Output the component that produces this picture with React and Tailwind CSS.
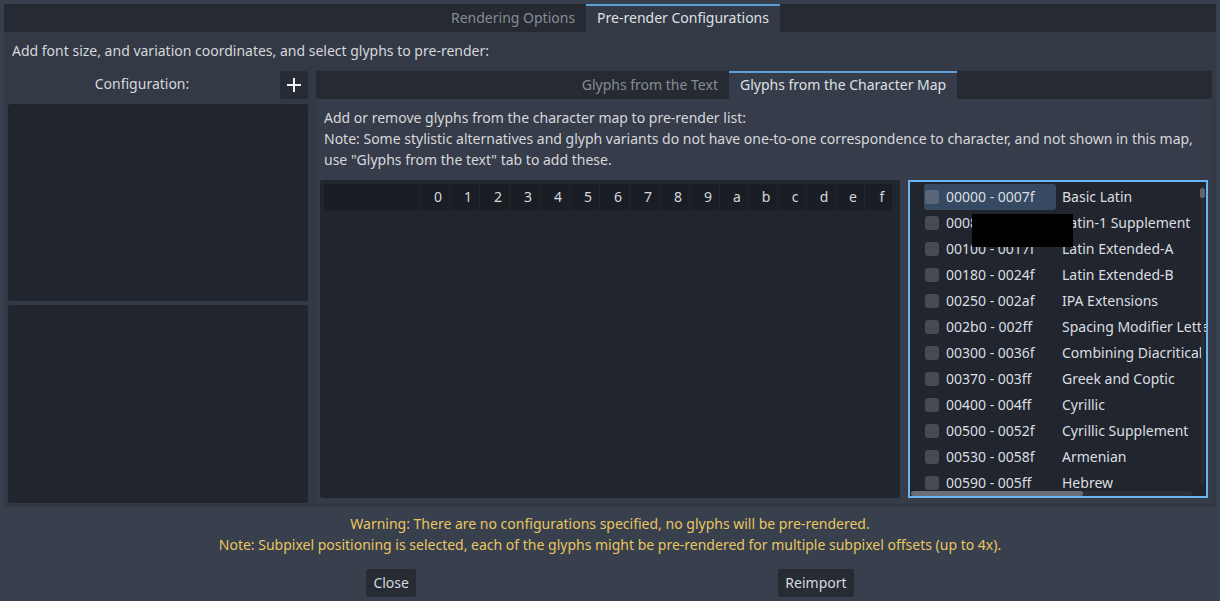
import React from "react";

const blocks = [
  ["00000 - 0007f", "Basic Latin"],
  ["00080 - 000ff", "Latin-1 Supplement"],
  ["00100 - 0017f", "Latin Extended-A"],
  ["00180 - 0024f", "Latin Extended-B"],
  ["00250 - 002af", "IPA Extensions"],
  ["002b0 - 002ff", "Spacing Modifier Letters"],
  ["00300 - 0036f", "Combining Diacritical Marks"],
  ["00370 - 003ff", "Greek and Coptic"],
  ["00400 - 004ff", "Cyrillic"],
  ["00500 - 0052f", "Cyrillic Supplement"],
  ["00530 - 0058f", "Armenian"],
  ["00590 - 005ff", "Hebrew"],
  ["00600 - 006ff", "Arabic"],
];

const digits = ["0", "1", "2", "3", "4", "5", "6", "7", "8", "9"];
const letters = ["a", "b", "c", "d", "e", "f"];

function Tab({ label, active, activeBg }) {
  return (
    <div
      className={
        active
          ? `h-[28px] px-[11px] pb-[4px] flex items-center border-t-2 border-[#5d9fd8] text-[#dfe1e4] ${activeBg}`
          : "h-[28px] px-[11px] pb-[2px] flex items-center text-[#878c94]"
      }
    >
      {label}
    </div>
  );
}

function PlusIcon() {
  return (
    <svg width="14" height="14" viewBox="0 0 14 14">
      <rect x="6" y="0" width="2" height="14" fill="#f2f3f5" />
      <rect x="0" y="6" width="14" height="2" fill="#f2f3f5" />
    </svg>
  );
}

function CharMapHeader() {
  return (
    <div className="flex h-[26px] w-[568px] bg-[#1a1d23] rounded-[3px] text-[#d6d8dc] overflow-hidden">
      <div className="w-[95px] shrink-0" />
      {digits.map((d) => (
        <div key={d} className="w-[30px] shrink-0 flex items-center justify-center pl-[7px] pb-[1px] border-l border-[#22262d]">
          {d}
        </div>
      ))}
      {letters.map((d) => (
        <div key={d} className="w-[29px] shrink-0 flex items-center justify-center pl-[6px] pb-[1px] border-l border-[#22262d]">
          {d}
        </div>
      ))}
    </div>
  );
}

function BlockRow({ range, name, selected }) {
  return (
    <div className="flex h-[26px] items-center whitespace-nowrap">
      <div
        className={
          selected
            ? "w-[132px] h-[26px] shrink-0 flex items-center rounded-[3px] bg-[#364b63] pl-[1px]"
            : "w-[132px] h-[26px] shrink-0 flex items-center pl-[1px]"
        }
      >
        <div className={selected ? "w-[14px] h-[14px] rounded-[3px] bg-[#5b6778]" : "w-[14px] h-[14px] rounded-[3px] bg-[#464a52]"} />
        <span className="ml-[7px] pb-[2px] text-[#dcdee1]">{range}</span>
      </div>
      <span className="ml-[6px] pb-[2px] text-[#dcdee1]">{name}</span>
    </div>
  );
}

export default function App() {
  return (
    <div className="w-[1220px] h-[601px] bg-[#383f4d] p-[4px] flex flex-col font-['Noto_Sans',sans-serif] text-[14px] text-[#d6d8dc] overflow-hidden">
      {/* main tab container */}
      <div className="h-[503px] flex flex-col">
        <div className="h-[28px] bg-[#252a33] flex justify-center">
          <Tab label="Rendering Options" />
          <Tab label="Pre-render Configurations" active activeBg="bg-[#333945]" />
        </div>
        <div className="flex-1 bg-[#333945] p-[4px] flex flex-col">
          <div className="h-[28px] pl-[4px] flex items-center">
            Add font size, and variation coordinates, and select glyphs to pre-render:
          </div>
          <div className="mt-[7px] flex gap-[8px] flex-1">
            {/* left: configurations */}
            <div className="w-[300px] flex flex-col">
              <div className="h-[28px] flex">
                <div className="flex-1 flex items-center justify-center pb-[3px]">Configuration:</div>
                <button className="w-[28px] h-[28px] ml-[4px] rounded-[3px] bg-[#262b34] flex items-center justify-center">
                  <PlusIcon />
                </button>
              </div>
              <div className="mt-[5px] h-[197px] bg-[#21252d] rounded-[3px]" />
              <div className="mt-[4px] flex-1 bg-[#21252d] rounded-[3px]" />
            </div>

            {/* right: glyph tabs */}
            <div className="flex-1 flex flex-col">
              <div className="h-[28px] bg-[#252a33] flex justify-center">
                <Tab label="Glyphs from the Text" />
                <Tab label="Glyphs from the Character Map" active activeBg="bg-[#363c4a]" />
              </div>
              <div className="flex-1 bg-[#363c4a] p-[4px] flex flex-col">
                <div className="h-[77px] pl-[4px] pt-[4px] leading-[21px] whitespace-nowrap">
                  <div>Add or remove glyphs from the character map to pre-render list:</div>
                  <div>Note: Some stylistic alternatives and glyph variants do not have one-to-one correspondence to character, and not shown in this map,</div>
                  <div>use "Glyphs from the text" tab to add these.</div>
                </div>
                <div className="h-[318px] flex gap-[8px]">
                  <div className="w-[580px] bg-[#21252d] rounded-[3px] p-[4px]">
                    <CharMapHeader />
                  </div>
                  <div className="w-[300px] border-2 border-[#6ab4f2] bg-[#21252d] relative overflow-hidden">
                    <div className="pt-[2px] pl-[14px]">
                      {blocks.map(([r, n], i) => (
                        <BlockRow key={r} range={r} name={n} selected={i === 0} />
                      ))}
                    </div>
                    {/* vertical scrollbar */}
                    <div className="absolute left-[291px] top-[4px] w-[3px] h-[300px] rounded-full bg-[#2a2e36]" />
                    <div className="absolute left-[290px] top-[6px] w-[5px] h-[10px] rounded-full bg-[#62666e]" />
                    {/* horizontal scrollbar */}
                    <div className="absolute left-[1px] top-[309px] w-[281px] h-[5px] rounded-full bg-[#2c3038]" />
                    <div className="absolute left-[1px] top-[309px] w-[172px] h-[5px] rounded-full bg-[#6a6e75]" />
                    {/* redaction box present in the screenshot */}
                    <div className="absolute left-[62px] top-[32px] w-[101px] h-[33px] bg-black" />
                  </div>
                </div>
              </div>
            </div>
          </div>
        </div>
      </div>

      {/* warnings */}
      <div className="mt-[6px] flex flex-col items-center leading-[22px] text-[#e8c660]">
        <div>Warning: There are no configurations specified, no glyphs will be pre-rendered.</div>
        <div className="-mt-px">Note: Subpixel positioning is selected, each of the glyphs might be pre-rendered for multiple subpixel offsets (up to 4x).</div>
      </div>

      {/* buttons */}
      <div className="mt-[13px] h-[28px] flex justify-evenly">
        <button className="h-[28px] px-[7px] pb-[2px] rounded-[3px] bg-[#262b34] text-[#d6d8dc]">Close</button>
        <button className="h-[28px] px-[7px] pb-[2px] rounded-[3px] bg-[#262b34] text-[#d6d8dc]">Reimport</button>
      </div>
    </div>
  );
}
